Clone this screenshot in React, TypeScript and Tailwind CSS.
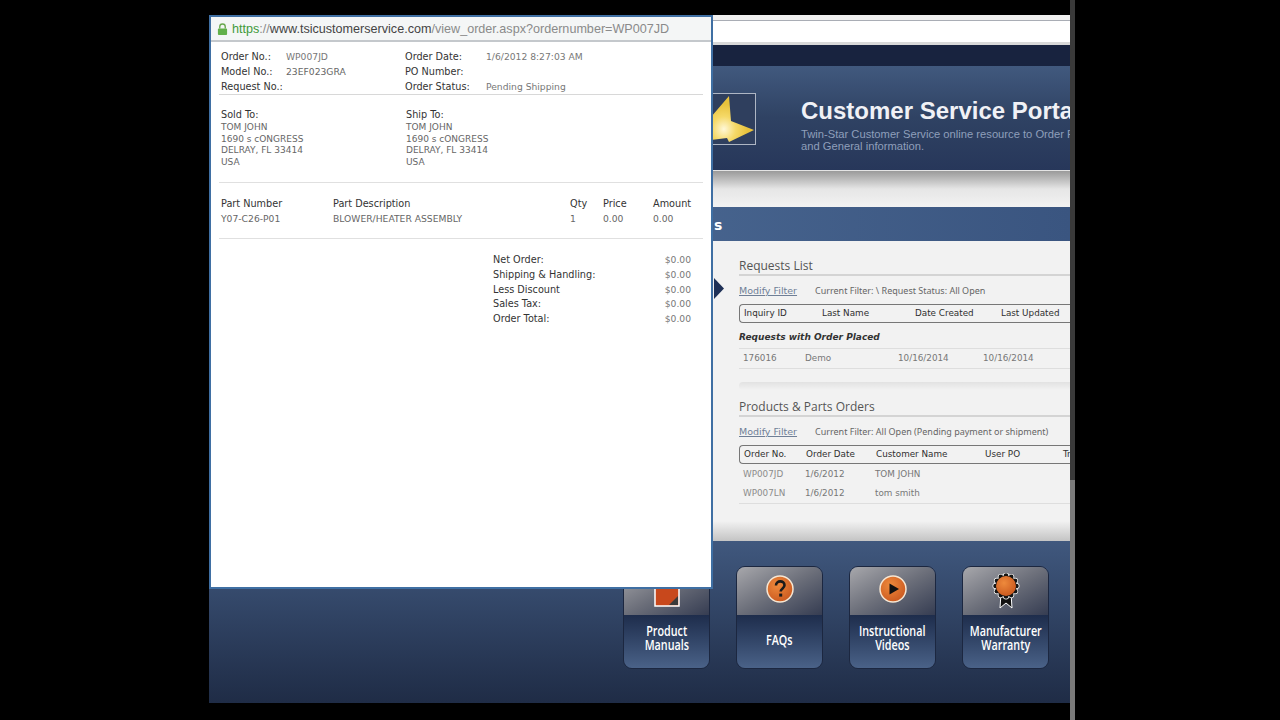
const dejavu = 'font-["DejaVu_Sans",sans-serif]';

function OrderPopup() {
  return (
    <div className={`absolute left-[209px] top-[15px] w-[504px] h-[574px] bg-white border-2 border-[#3f6fa3] ${dejavu} text-[9.7px] text-[#444]`}>
      <div className="h-[25px] flex items-center pl-[6px] pt-[2px] gap-[4px] bg-[#f4f6f6] border-b-2 border-[#c4c8cc] font-['Liberation_Sans',sans-serif] text-[12.6px] text-[#8a8a8a] whitespace-nowrap overflow-hidden">
        <svg className="shrink-0" width="11" height="13" viewBox="0 0 12 14">
          <path d="M3 6V4a3 3 0 0 1 6 0v2" fill="none" stroke="#6aa84f" strokeWidth="1.5" />
          <rect x="1" y="6" width="10" height="7" rx="1" fill="#62b04a" />
        </svg>
        <span>
          <span className="text-[#3f9a3a]">https</span>://
          <span className="text-[#444]">www.tsicustomerservice.com</span>/view_order.aspx?ordernumber=WP007JD
        </span>
      </div>

      <div className="px-[10px] pt-[7px]">
        <div className="grid grid-cols-[65px_119px_81px_1fr] content-start leading-[15px] h-[46px] border-b border-[#d8d8d8] mx-[-2px] px-[2px]">
          <span className="text-[#333]">Order No.:</span>
          <span className="text-[#777] text-[9.2px]">WP007JD</span>
          <span className="text-[#333]">Order Date:</span>
          <span className="text-[#777] text-[9.2px]">1/6/2012 8:27:03 AM</span>
          <span className="text-[#333]">Model No.:</span>
          <span className="text-[#666] text-[9.2px]">23EF023GRA</span>
          <span className="text-[#333]">PO Number:</span>
          <span></span>
          <span className="text-[#333]">Request No.:</span>
          <span></span>
          <span className="text-[#333]">Order Status:</span>
          <span className="text-[#777] text-[9.2px]">Pending Shipping</span>
        </div>

        <div className="flex pt-[13px] h-[88px] border-b border-[#e0e0e0] mx-[-2px] px-[2px]">
          {['Sold To:', 'Ship To:'].map(label => (
            <div key={label} className="w-[185px] leading-[11.6px] text-[#666] text-[9px]">
              <div className="text-[9.7px] text-[#333] leading-[14px]">{label}</div>
              <div>TOM JOHN</div>
              <div>1690 s cONGRESS</div>
              <div>DELRAY, FL 33414</div>
              <div>USA</div>
            </div>
          ))}
        </div>

        <div className="grid grid-cols-[112px_237px_33px_50px_1fr] content-start leading-[15px] pt-[13px] h-[56px] border-b border-[#e0e0e0] mx-[-2px] px-[2px]">
          <span className="text-[#333]">Part Number</span>
          <span className="text-[#333]">Part Description</span>
          <span className="text-[#333]">Qty</span>
          <span className="text-[#333]">Price</span>
          <span className="text-[#333]">Amount</span>
          <span className="text-[#666] text-[9.2px]">Y07-C26-P01</span>
          <span className="text-[#666] text-[9.2px]">BLOWER/HEATER ASSEMBLY</span>
          <span className="text-[#666] text-[9.2px]">1</span>
          <span className="text-[#666] text-[9.2px]">0.00</span>
          <span className="text-[#666] text-[9.2px]">0.00</span>
        </div>

        <div className="ml-[272px] mr-[10px] pt-[14px] leading-[14.8px]">
          {['Net Order:', 'Shipping & Handling:', 'Less Discount', 'Sales Tax:', 'Order Total:'].map(label => (
            <div key={label} className="flex justify-between">
              <span className="text-[#333]">{label}</span>
              <span className="text-[#777] text-[9.2px]">$0.00</span>
            </div>
          ))}
        </div>
      </div>
    </div>
  );
}

function TableHeader({ cols, tpl }: { cols: string[]; tpl: string }) {
  return (
    <div className={`grid ${tpl} items-center h-[19px] border border-r-0 border-[#777] rounded-l-[4px] pl-[4px] text-[#2f2f2f] whitespace-nowrap`}>
      {cols.map(c => <span key={c}>{c}</span>)}
    </div>
  );
}

function Tile({ label, icon }: { label: string[]; icon: React.ReactNode }) {
  return (
    <div className="w-[87px] h-[103px] rounded-[9px] overflow-hidden border border-[#1c2740] flex flex-col">
      <div className="h-[48px] flex justify-center items-start pt-[8px] bg-gradient-to-br from-[#a8a8ac] via-[#6c6f7a] to-[#363d52]">
        {icon}
      </div>
      <div className={`flex-1 flex flex-col justify-center items-center ${label.length > 1 ? 'pb-[7px]' : 'pb-[3px]'} bg-gradient-to-b from-[#1e2d4c] to-[#4a6288] text-white font-['Open_Sans',sans-serif] font-semibold text-[14px] leading-[14px]`}>
        {label.map(l => <span key={l} className="scale-x-[.77] whitespace-nowrap">{l}</span>)}
      </div>
    </div>
  );
}

const orangeDisc = (
  <>
    <defs>
      <radialGradient id="disc" cx="0.4" cy="0.35" r="0.8">
        <stop offset="0" stopColor="#ee8a3c" />
        <stop offset="1" stopColor="#c4501a" />
      </radialGradient>
    </defs>
    <circle cx="14" cy="14" r="13" fill="url(#disc)" stroke="#f6e6d2" strokeWidth="1.5" />
  </>
);

const scallops = Array.from({ length: 12 }, (_, i) => {
  const a = (i / 12) * Math.PI * 2;
  return { cx: 14 + Math.cos(a) * 10.5, cy: 13 + Math.sin(a) * 10.5 };
});

export default function App() {
  return (
    <div className="relative w-[1280px] h-[720px] bg-black overflow-hidden flex pl-[209px] pt-[15px]">
      <div className="w-[861px] h-[688px] flex flex-col overflow-hidden bg-[#f2f2f2]">
        {/* browser bars */}
        <div className="h-[6px] bg-[#f0f0f0] border-b border-[#a9adb5]" />
        <div className="h-[21px] bg-white" />
        <div className="h-[3px] bg-[#d8d8d8]" />
        <div className="h-[21px] bg-[#18233f]" />

        {/* banner */}
        <div className="h-[104px] shrink-0 flex items-center pl-[451px] bg-gradient-to-b from-[#41597e] via-[#2f4263] to-[#27375a]">
          <div className="w-[96px] h-[52px] mt-[1px] border border-[#aeb6c4] flex justify-end items-stretch shrink-0 bg-[#2f3f5e]">
            <svg width="44" height="50" viewBox="0 0 44 50">
              <defs>
                <radialGradient id="glow" cx="0.3" cy="0.72" r="0.55">
                  <stop offset="0" stopColor="#fff8d8" />
                  <stop offset="0.5" stopColor="#f5d968" />
                  <stop offset="1" stopColor="#e8c23c" />
                </radialGradient>
              </defs>
              <path d="M18 2 L20 27 L43 36 L18 48 L16 44 L0 46 L0 23 Z" fill="url(#glow)" />
            </svg>
          </div>
          <div className="pl-[45px] whitespace-nowrap mt-[12px]">
            <div className="font-['Liberation_Sans',sans-serif] font-bold text-[24px] leading-[30px] text-[#f0f1f6]">Customer Service Portal</div>
            <div className="font-['Liberation_Sans',sans-serif] text-[11.2px] leading-[12px] mt-[2px] text-[#8f9fbb]">
              <div>Twin-Star Customer Service online resource to Order Parts</div>
              <div>and General information.</div>
            </div>
          </div>
        </div>
        <div className="h-[1px] bg-[#e4e4e4]" />
        <div className="h-[36px] shrink-0 bg-gradient-to-b from-[#9a9a9a] via-[#e6e6e6] to-[#f2f2f2]" />

        {/* section bar */}
        <div className="h-[34px] shrink-0 flex items-center pl-[505px] pt-[3px] bg-gradient-to-r from-[#2f4670] via-[#48658f] to-[#3a5580] font-['DejaVu_Sans',sans-serif] font-bold text-[14px] text-white">
          s
        </div>

        {/* lists */}
        <div className={`relative h-[300px] shrink-0 pl-[530px] ${dejavu} text-[8.8px] text-[#666]`}>
          <svg className="absolute left-[505px] top-[37px]" width="10" height="21" viewBox="0 0 10 21">
            <path d="M0 0 L10 10.5 L0 21 Z" fill="#1f3157" />
          </svg>

          <section className="h-[141px] pt-[16px] whitespace-nowrap">
            <h2 className="font-['Open_Sans',sans-serif] text-[12px] leading-[17px] text-[#555] border-b-2 border-[#d4d4d4] h-[19px]">Requests List</h2>
            <div className="flex items-center h-[28px] pt-[2px]">
              <a className="w-[76px] underline text-[#6f7f96] text-[9.5px]">Modify Filter</a>
              <span className="text-[#666] font-['Noto_Sans',sans-serif] text-[9px]">Current Filter: \ Request Status: All Open</span>
            </div>
            <TableHeader cols={['Inquiry ID', 'Last Name', 'Date Created', 'Last Updated']} tpl="grid-cols-[78px_93px_86px_1fr]" />
            <div className="font-bold italic text-[9px] text-[#333] h-[26px] leading-[29px] border-b border-[#dedede]">Requests with Order Placed</div>
            <div className="grid grid-cols-[62px_93px_85px_1fr] items-center pl-[4px] h-[20px] border-b border-[#dedede] text-[#777]">
              <span>176016</span><span>Demo</span><span>10/16/2014</span><span>10/16/2014</span>
            </div>
          </section>

          <div className="h-[8px] bg-gradient-to-b from-[#e2e2e2] to-[#f2f2f2] rounded-l-full" />

          <section className="h-[128px] pt-[8px] whitespace-nowrap">
            <h2 className="font-['Open_Sans',sans-serif] text-[12px] leading-[17px] text-[#555] border-b-2 border-[#d4d4d4] h-[19px]">Products &amp; Parts Orders</h2>
            <div className="flex items-center h-[28px] pt-[2px]">
              <a className="w-[76px] underline text-[#6f7f96] text-[9.5px]">Modify Filter</a>
              <span className="text-[#666] font-['Noto_Sans',sans-serif] text-[9px]">Current Filter: All Open (Pending payment or shipment)</span>
            </div>
            <TableHeader cols={['Order No.', 'Order Date', 'Customer Name', 'User PO', 'Tr']} tpl="grid-cols-[62px_70px_109px_78px_1fr]" />
            <div className="grid grid-cols-[62px_70px_1fr] items-center pl-[4px] leading-[19px] pt-[1px] border-b border-[#dedede] text-[#777] h-[40px]">
              <span className="text-[#8c8c8c]">WP007JD</span><span>1/6/2012</span><span>TOM JOHN</span>
              <span className="text-[#8c8c8c]">WP007LN</span><span>1/6/2012</span><span>tom smith</span>
            </div>
          </section>
        </div>

        {/* footer with tiles */}
        <div className="h-[20px] shrink-0 mt-[-20px] bg-gradient-to-b from-[#f2f2f2] to-[#c4c4c4]" />
        <div className="flex-1 pl-[414px] pt-[25px] flex gap-[26px] bg-gradient-to-b from-[#40587e] to-[#1f2c46]">
          <Tile
            label={['Product', 'Manuals']}
            icon={
              <svg className="mt-[10px]" width="26" height="22" viewBox="0 0 26 22">
                <rect x="1" y="1" width="24" height="20" fill="#c8481c" stroke="#fff" strokeWidth="1.5" />
                <path d="M24 11 L15 20 H24 Z" fill="#3a3a3a" />
              </svg>
            }
          />
          <Tile
            label={['FAQs']}
            icon={
              <svg width="28" height="28" viewBox="0 0 28 28">
                {orangeDisc}
                <path d="M10 10.5c0-5.5 8.5-5.5 8.5 -0.2c0 3.2-3.8 3-3.8 6.2" fill="none" stroke="#1b1b1b" strokeWidth="2.6" />
                <rect x="13.2" y="18.6" width="3" height="3" fill="#1b1b1b" />
              </svg>
            }
          />
          <Tile
            label={['Instructional', 'Videos']}
            icon={
              <svg width="28" height="28" viewBox="0 0 28 28">
                {orangeDisc}
                <path d="M10.5 8.5 L20 14 L10.5 19.5 Z" fill="#111" />
              </svg>
            }
          />
          <Tile
            label={['Manufacturer', 'Warranty']}
            icon={
              <svg className="mt-[-2px]" width="28" height="36" viewBox="0 0 28 36">
                <path d="M9 20 L8 35 L14 30 L20 35 L19 20 Z" fill="#111" stroke="#fff" strokeWidth="1" />
                {scallops.map((s, i) => <circle key={i} cx={s.cx} cy={s.cy} r="3" fill="#fff" />)}
                {scallops.map((s, i) => <circle key={i} cx={s.cx} cy={s.cy} r="2.3" fill="#141414" />)}
                <circle cx="14" cy="13" r="10.5" fill="#141414" />
                <circle cx="14" cy="13" r="10" fill="url(#disc)" />
              </svg>
            }
          />
        </div>
      </div>

      {/* scrollbar strip at the window edge */}
      <div className="w-[5px] h-[720px] mt-[-15px] flex flex-col">
        <div className="h-[480px] bg-[#3a3a3a]" />
        <div className="flex-1 bg-[#7a7a7a]" />
      </div>

      <OrderPopup />
    </div>
  );
}
